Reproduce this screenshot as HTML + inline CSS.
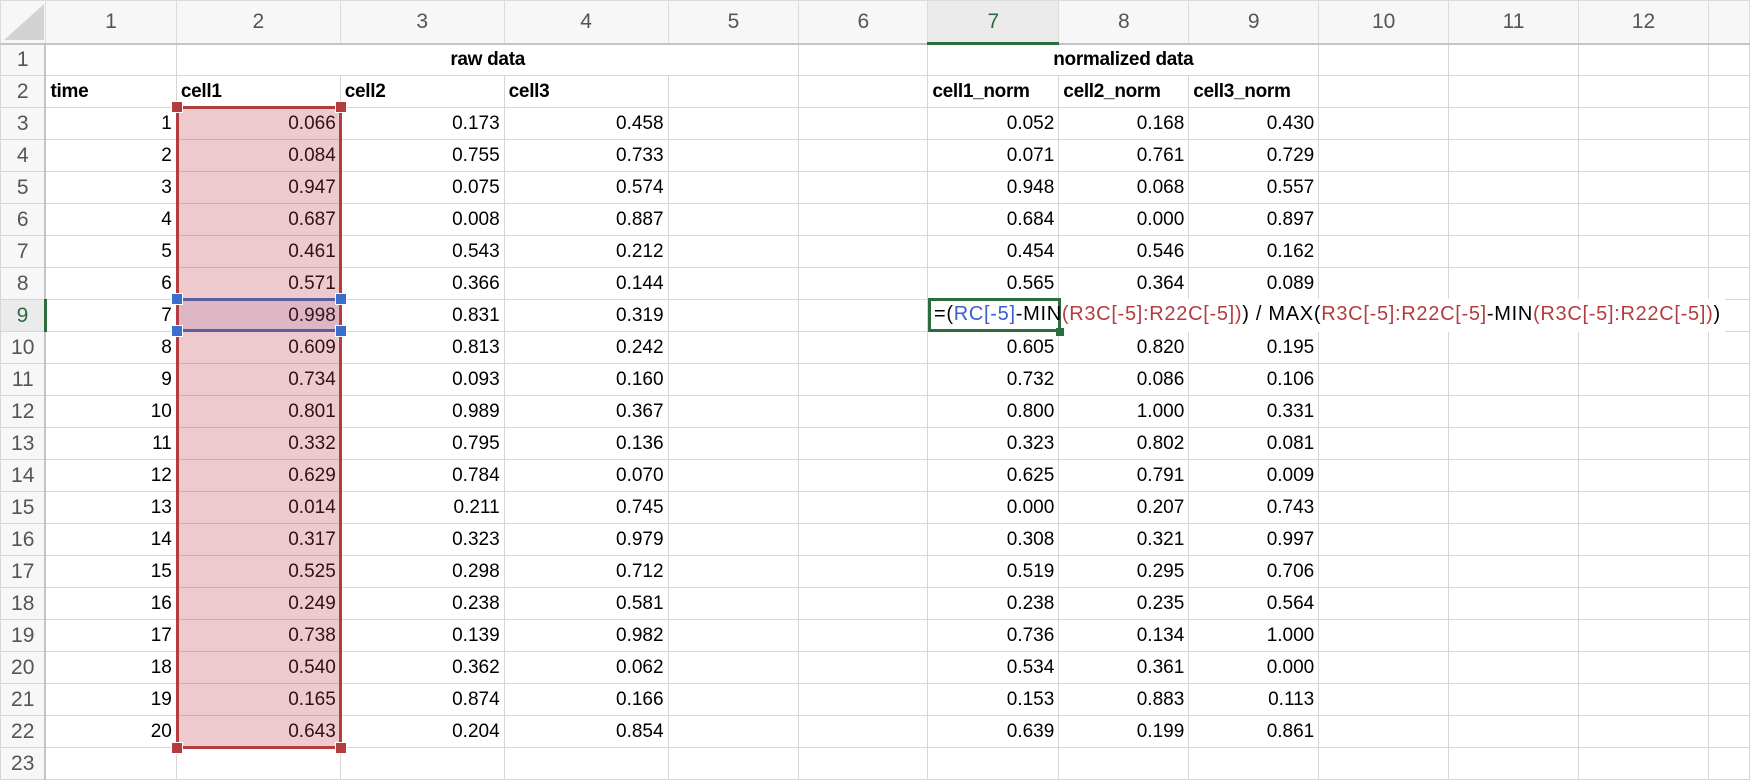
<!DOCTYPE html>
<html><head><meta charset="utf-8"><style>
*{margin:0;padding:0;box-sizing:border-box}
body{width:1750px;height:784px;overflow:hidden;background:#fff;position:relative;font-family:"Liberation Sans",Arial,sans-serif}
table{border-collapse:collapse;table-layout:fixed;position:absolute;left:0;top:0}
td{border:1px solid #d6d6d6;height:32px;font-size:19px;color:#000;white-space:nowrap;overflow:hidden;padding:0 4px;text-align:right}
tr.h td{height:43px;background:#f7f7f7;color:#555;text-align:center;font-size:21px;border-color:#dcdcdc;border-bottom:2px solid #c4c4c4}
td.r{background:#f7f7f7;color:#555;text-align:center;font-size:21px;padding:0;border-right:2px solid #c4c4c4}
.b{font-weight:bold;text-align:left;letter-spacing:-0.3px}
.c{text-align:center;font-weight:bold;letter-spacing:-0.3px}
.abs{position:absolute}
</style></head><body>
<table>
<colgroup><col style="width:45px"><col style="width:131px"><col style="width:164px"><col style="width:164px"><col style="width:164px"><col style="width:131px"><col style="width:129px"><col style="width:131px"><col style="width:130px"><col style="width:130px"><col style="width:130px"><col style="width:130px"><col style="width:130px"><col style="width:41px"></colgroup>
<tr class="h"><td style="background:#f7f7f7"></td><td>1</td><td>2</td><td>3</td><td>4</td><td>5</td><td>6</td><td style="background:#ebebeb;color:#2e6b3f;border-bottom:3px solid #2e6b3f">7</td><td>8</td><td>9</td><td>10</td><td>11</td><td>12</td><td></td></tr>
<tr><td class="r">1</td><td></td><td colspan="4" class="c">raw data</td><td></td><td colspan="3" class="c">normalized data</td><td></td><td></td><td></td><td></td></tr>
<tr><td class="r">2</td><td class="b">time</td><td class="b">cell1</td><td class="b">cell2</td><td class="b">cell3</td><td></td><td></td><td class="b">cell1_norm</td><td class="b">cell2_norm</td><td class="b">cell3_norm</td><td></td><td></td><td></td><td></td></tr>
<tr><td class="r">3</td><td>1</td><td>0.066</td><td>0.173</td><td>0.458</td><td></td><td></td><td>0.052</td><td>0.168</td><td>0.430</td><td></td><td></td><td></td><td></td></tr>
<tr><td class="r">4</td><td>2</td><td>0.084</td><td>0.755</td><td>0.733</td><td></td><td></td><td>0.071</td><td>0.761</td><td>0.729</td><td></td><td></td><td></td><td></td></tr>
<tr><td class="r">5</td><td>3</td><td>0.947</td><td>0.075</td><td>0.574</td><td></td><td></td><td>0.948</td><td>0.068</td><td>0.557</td><td></td><td></td><td></td><td></td></tr>
<tr><td class="r">6</td><td>4</td><td>0.687</td><td>0.008</td><td>0.887</td><td></td><td></td><td>0.684</td><td>0.000</td><td>0.897</td><td></td><td></td><td></td><td></td></tr>
<tr><td class="r">7</td><td>5</td><td>0.461</td><td>0.543</td><td>0.212</td><td></td><td></td><td>0.454</td><td>0.546</td><td>0.162</td><td></td><td></td><td></td><td></td></tr>
<tr><td class="r">8</td><td>6</td><td>0.571</td><td>0.366</td><td>0.144</td><td></td><td></td><td>0.565</td><td>0.364</td><td>0.089</td><td></td><td></td><td></td><td></td></tr>
<tr><td class="r" style="color:#2e6b3f;background:#ebebeb;border-right:3px solid #2e6b3f">9</td><td>7</td><td>0.998</td><td>0.831</td><td>0.319</td><td></td><td></td><td></td><td></td><td></td><td></td><td></td><td></td><td></td></tr>
<tr><td class="r">10</td><td>8</td><td>0.609</td><td>0.813</td><td>0.242</td><td></td><td></td><td>0.605</td><td>0.820</td><td>0.195</td><td></td><td></td><td></td><td></td></tr>
<tr><td class="r">11</td><td>9</td><td>0.734</td><td>0.093</td><td>0.160</td><td></td><td></td><td>0.732</td><td>0.086</td><td>0.106</td><td></td><td></td><td></td><td></td></tr>
<tr><td class="r">12</td><td>10</td><td>0.801</td><td>0.989</td><td>0.367</td><td></td><td></td><td>0.800</td><td>1.000</td><td>0.331</td><td></td><td></td><td></td><td></td></tr>
<tr><td class="r">13</td><td>11</td><td>0.332</td><td>0.795</td><td>0.136</td><td></td><td></td><td>0.323</td><td>0.802</td><td>0.081</td><td></td><td></td><td></td><td></td></tr>
<tr><td class="r">14</td><td>12</td><td>0.629</td><td>0.784</td><td>0.070</td><td></td><td></td><td>0.625</td><td>0.791</td><td>0.009</td><td></td><td></td><td></td><td></td></tr>
<tr><td class="r">15</td><td>13</td><td>0.014</td><td>0.211</td><td>0.745</td><td></td><td></td><td>0.000</td><td>0.207</td><td>0.743</td><td></td><td></td><td></td><td></td></tr>
<tr><td class="r">16</td><td>14</td><td>0.317</td><td>0.323</td><td>0.979</td><td></td><td></td><td>0.308</td><td>0.321</td><td>0.997</td><td></td><td></td><td></td><td></td></tr>
<tr><td class="r">17</td><td>15</td><td>0.525</td><td>0.298</td><td>0.712</td><td></td><td></td><td>0.519</td><td>0.295</td><td>0.706</td><td></td><td></td><td></td><td></td></tr>
<tr><td class="r">18</td><td>16</td><td>0.249</td><td>0.238</td><td>0.581</td><td></td><td></td><td>0.238</td><td>0.235</td><td>0.564</td><td></td><td></td><td></td><td></td></tr>
<tr><td class="r">19</td><td>17</td><td>0.738</td><td>0.139</td><td>0.982</td><td></td><td></td><td>0.736</td><td>0.134</td><td>1.000</td><td></td><td></td><td></td><td></td></tr>
<tr><td class="r">20</td><td>18</td><td>0.540</td><td>0.362</td><td>0.062</td><td></td><td></td><td>0.534</td><td>0.361</td><td>0.000</td><td></td><td></td><td></td><td></td></tr>
<tr><td class="r">21</td><td>19</td><td>0.165</td><td>0.874</td><td>0.166</td><td></td><td></td><td>0.153</td><td>0.883</td><td>0.113</td><td></td><td></td><td></td><td></td></tr>
<tr><td class="r">22</td><td>20</td><td>0.643</td><td>0.204</td><td>0.854</td><td></td><td></td><td>0.639</td><td>0.199</td><td>0.861</td><td></td><td></td><td></td><td></td></tr>
<tr><td class="r">23</td><td></td><td></td><td></td><td></td><td></td><td></td><td></td><td></td><td></td><td></td><td></td><td></td><td></td></tr>
</table>
<div class="abs" style="left:178px;top:108px;width:162px;height:639px;background:rgba(190,60,75,0.27)"></div>
<div class="abs" style="left:178px;top:300px;width:162px;height:31px;background:rgba(110,60,120,0.12)"></div>
<div class="abs" style="left:176px;top:106px;width:166px;height:643px;border:3px solid #b43c3f"></div>
<div class="abs" style="left:176px;top:298px;width:166px;height:3px;background:#5c5e9e"></div>
<div class="abs" style="left:176px;top:329px;width:166px;height:3px;background:#5c5e9e"></div>
<div class="abs" style="left:172px;top:102px;width:10px;height:10px;background:#b43c3f;outline:1px solid #fff"></div>
<div class="abs" style="left:336px;top:102px;width:10px;height:10px;background:#b43c3f;outline:1px solid #fff"></div>
<div class="abs" style="left:172px;top:743px;width:10px;height:10px;background:#b43c3f;outline:1px solid #fff"></div>
<div class="abs" style="left:336px;top:743px;width:10px;height:10px;background:#b43c3f;outline:1px solid #fff"></div>
<div class="abs" style="left:172px;top:294px;width:10px;height:10px;background:#3b6fcf;outline:1px solid #fff"></div>
<div class="abs" style="left:336px;top:294px;width:10px;height:10px;background:#3b6fcf;outline:1px solid #fff"></div>
<div class="abs" style="left:172px;top:326px;width:10px;height:10px;background:#3b6fcf;outline:1px solid #fff"></div>
<div class="abs" style="left:336px;top:326px;width:10px;height:10px;background:#3b6fcf;outline:1px solid #fff"></div>
<div class="abs" style="left:929px;top:299px;width:796px;height:33px;background:#fff"></div>
<div class="abs" style="left:928px;top:298px;width:133px;height:34px;border:3px solid #2e6b3f"></div>
<div class="abs" style="left:1056px;top:328px;width:8px;height:8px;background:#2e6b3f"></div>
<div class="abs" style="left:934px;top:303px;font-size:20px;white-space:nowrap;letter-spacing:0.7px;color:#000">=(<span style="color:#3b5fcf">RC[-5]</span>-MIN<span style="color:#b43c3f">(R3C[-5]:R22C[-5])</span>) / MAX(<span style="color:#b43c3f">R3C[-5]:R22C[-5]</span>-MIN<span style="color:#b43c3f">(R3C[-5]:R22C[-5])</span>)</div>
<div class="abs" style="width:0;height:0;border-left:40px solid transparent;border-bottom:36px solid #d3d3d3;left:4px;top:4px"></div>
</body></html>
